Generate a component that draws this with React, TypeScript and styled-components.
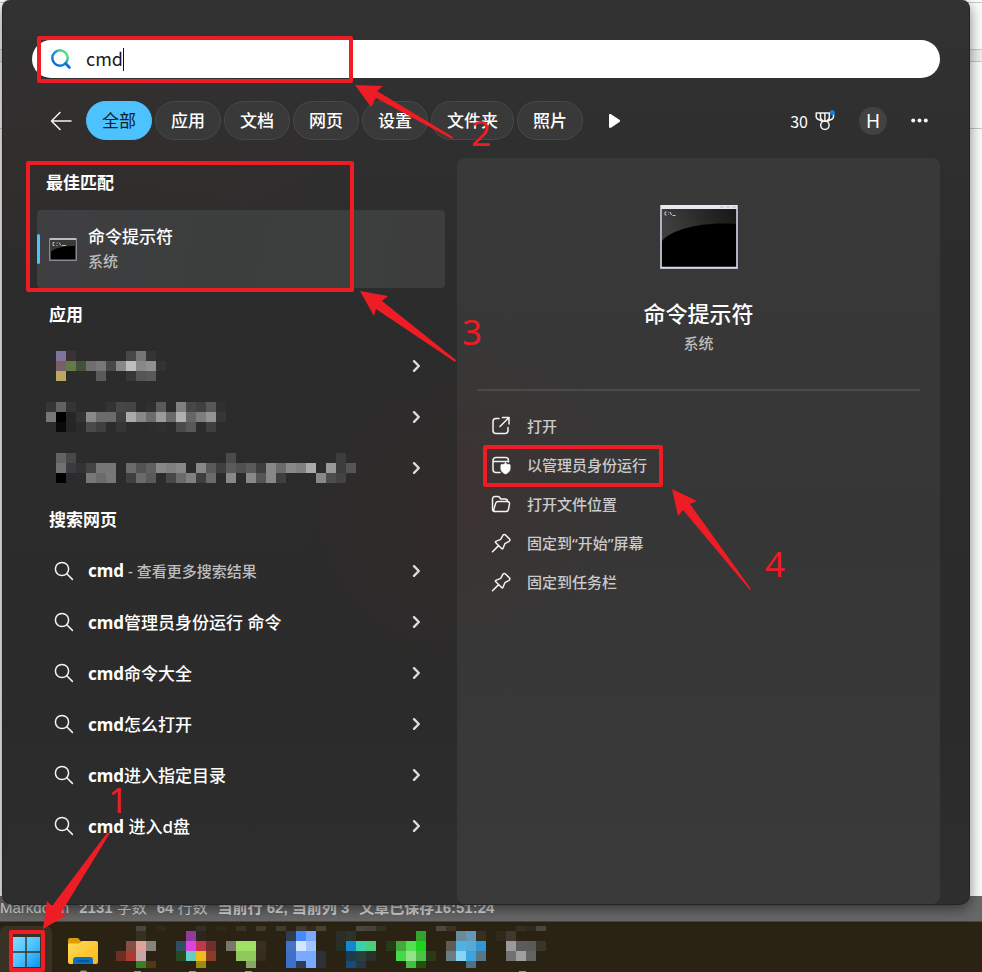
import React, { useState } from "react";
import styled, { createGlobalStyle, css } from "styled-components";

const RED = "#ee1c24";
const UI_FONT = `"Noto Sans", "Noto Sans CJK SC", sans-serif`;
const NARROW_FONT = `"Noto Sans CJK SC", sans-serif`;

const GlobalStyle = createGlobalStyle`
  *, *::before, *::after { box-sizing: border-box; }
  body {
    margin: 0;
    background: #fff;
    color: #fff;
    font-family: ${UI_FONT};
    font-size: 15px;
  }
  button, input { font: inherit; color: inherit; }
  h1, h2, p, ul { margin: 0; padding: 0; }
  ul { list-style: none; }
  svg { display: block; flex: none; }
`;

/* ---------- desktop ---------- */

const Desktop = styled.div`
  position: relative;
  display: grid;
  grid-template-rows: 1fr auto auto;
  grid-template-columns: minmax(0, 1fr);
  min-height: 100vh;
  overflow: hidden;
`;

const Editor = styled.div`
  grid-area: 1 / 1;
  display: flex;
  flex-direction: column;
  background: #fdfdfd;
`;

const EditorStrip = styled.div<{ $height: number; $shade?: boolean }>`
  height: ${(p) => p.$height}px;
  border-bottom: 1px solid #c9c9c9;
  background: ${(p) => (p.$shade ? "#efefef" : "#fdfdfd")};
`;

const StatusBar = styled.footer`
  grid-area: 2 / 1;
  display: flex;
  gap: 10px;
  height: 26px;
  line-height: 24px;
  background: #686868;
  border-bottom: 1px solid #4b4534;
  color: #dadada;
  font-family: "Liberation Sans", "Noto Sans CJK SC", sans-serif;
  font-size: 15px;
  white-space: pre;
`;

const StatusItem = styled.span`
  b { font-weight: 700; }
`;

const Panel = styled.main`
  grid-area: 1 / 1 / 3 / 2;
  display: flex;
  flex-direction: column;
  margin: 0 12px 17px 2px;
  padding: 40px 29px 0;
  border: 1px solid #242424;
  border-top: 0;
  border-radius: 8px 8px 10px 10px;
  box-shadow: 0 4px 14px rgba(0, 0, 0, 0.5);
  background:
    radial-gradient(260px 160px at 110px 160px, rgba(70, 40, 40, 0.16), transparent),
    radial-gradient(160px 160px at 450px 520px, rgba(80, 40, 30, 0.14), transparent),
    linear-gradient(#323232, #2c2c2c 30%, #2b2b2b 80%, #2e2e2e);
  z-index: 1;
`;

/* ---------- search box ---------- */

const SearchBox = styled.label`
  display: flex;
  align-items: center;
  height: 38px;
  padding-left: 18px;
  border-radius: 19px;
  background: #fff;
  color: #1b1b1b;
`;

const SearchInput = styled.input`
  field-sizing: content;
  min-width: 10px;
  margin-left: 14px;
  padding: 0 0 2px;
  border: 0;
  outline: 0;
  background: transparent;
  caret-color: transparent;
  font-family: ${NARROW_FONT};
  font-size: 18px;
  line-height: 26px;
`;

const Caret = styled.span`
  width: 1px;
  height: 23px;
  background: #111;
`;

/* ---------- filter bar ---------- */

const FilterBar = styled.nav`
  display: flex;
  align-items: center;
  height: 39px;
  margin-top: 23px;
  padding: 0 12px 0 18px;
`;

const IconButton = styled.button`
  display: inline-flex;
  align-items: center;
  padding: 0;
  border: 0;
  background: transparent;
`;

const Pills = styled.div`
  display: flex;
  gap: 3px;
  margin: 0 25px 0 14px;
`;

const Pill = styled.button<{ $active?: boolean }>`
  height: 39px;
  padding: 0 15px;
  border: 1px solid #484848;
  border-radius: 20px;
  background: #393939;
  font-size: 17px;
  font-weight: 500;
  line-height: 37px;
  white-space: nowrap;
  ${(p) =>
    p.$active &&
    css`
      border-color: #4cc2ff;
      background: #4cc2ff;
      color: #10212b;
      font-weight: 400;
    `}
`;

const Account = styled.div`
  display: flex;
  align-items: center;
  gap: 24px;
  margin-left: auto;
`;

const Rewards = styled(IconButton)`
  gap: 7px;
  font-family: ${NARROW_FONT};
  font-size: 16px;
  line-height: 20px;
`;

const Avatar = styled.button`
  width: 28px;
  height: 28px;
  padding: 0;
  border: 0;
  border-radius: 50%;
  background: #424242;
  font-size: 19px;
  line-height: 28px;
`;

/* ---------- results ---------- */

const Columns = styled.div`
  flex: 1;
  display: grid;
  grid-template-columns: 413fr 483fr;
  gap: 12px;
  margin-top: 18px;
`;

const Results = styled.section`
  padding-left: 5px;
  min-width: 0;
`;

const SectionTitle = styled.h2<{ $first?: boolean }>`
  padding: ${(p) => (p.$first ? "0 0 2px 9px" : "2px 0 0 12px")};
  font-size: 17px;
  font-weight: 700;
  line-height: 50px;
`;

const BestMatch = styled.button`
  display: flex;
  align-items: center;
  width: 100%;
  height: 78px;
  padding: 0;
  border: 0;
  border-radius: 4px;
  background: linear-gradient(100deg, #403e41, #3c3e3e 40%, #3d3d3d);
  text-align: left;
`;

const Accent = styled.span`
  width: 3px;
  height: 30px;
  margin-right: 9px;
  border-radius: 2px;
  background: #4cc2ff;
`;

const MatchText = styled.span`
  display: flex;
  flex-direction: column;
  margin-left: 11px;
  font-size: 17px;
  font-weight: 500;
  line-height: 24px;
`;

const Muted = styled.span`
  color: #bdbdbd;
  font-size: 15px;
  font-weight: 500;
`;

const Row = styled.button<{ $inset: number }>`
  display: flex;
  align-items: center;
  gap: 14px;
  width: 100%;
  height: 51px;
  padding: 0 24px 0 ${(p) => p.$inset}px;
  border: 0;
  background: transparent;
  font-size: 17px;
  font-weight: 500;
  text-align: left;
`;

const RowText = styled.span`
  flex: 1;
  min-width: 0;
  white-space: pre;
  b { font-weight: 700; }
`;

/* ---------- details ---------- */

const Details = styled.section`
  padding: 47px 20px 0;
  border-radius: 8px;
  background:
    radial-gradient(180px 170px at 0 330px, rgba(80, 40, 35, 0.22), transparent),
    linear-gradient(#393939, #363636 50%, #3a3a3a);
`;

const Hero = styled.header`
  display: flex;
  flex-direction: column;
  align-items: center;
  padding-bottom: 34px;
  border-bottom: 2px solid #4b4b4b;
`;

const HeroTitle = styled.h1`
  margin-top: 27px;
  font-size: 22px;
  font-weight: 500;
  line-height: 34px;
`;

const HeroKind = styled.p`
  margin-top: 1px;
  color: #bdbdbd;
  font-weight: 500;
  line-height: 24px;
`;

const Actions = styled.ul`
  padding-top: 15px;
`;

const Action = styled.button`
  display: flex;
  align-items: center;
  gap: 16px;
  width: 100%;
  height: 39px;
  padding: 0 14px;
  border: 0;
  background: transparent;
  color: #cacaca;
  font-weight: 500;
  white-space: nowrap;
`;

/* ---------- taskbar ---------- */

const Taskbar = styled.nav`
  grid-area: 3 / 1;
  display: flex;
  align-items: stretch;
  height: 50px;
  background: #2a2314;
`;

const TaskButton = styled.button<{ $start?: boolean; $wide?: boolean }>`
  display: flex;
  justify-content: center;
  align-items: flex-start;
  flex: none;
  width: ${(p) => (p.$start ? "52px" : p.$wide ? "64px" : "auto")};
  margin-top: 4px;
  padding: ${(p) => (p.$start || p.$wide ? "10px 0 0" : "0")};
  border: 0;
  border-radius: 6px 6px 0 0;
  background: ${(p) => (p.$start ? "#393224" : "transparent")};
`;

/* ---------- annotations ---------- */

const Annotations = styled.svg`
  position: absolute;
  top: 0;
  left: 0;
  z-index: 2;
  pointer-events: none;
  font-family: "Noto Sans", sans-serif;
  font-size: 35px;
`;

/* ---------- drawings ---------- */

const Stroke = ({ size = 20, width = 1.5, children }: { size?: number; width?: number; children: React.ReactNode }) => (
  <svg width={size} height={size} viewBox="0 0 20 20" fill="none" stroke="#f4f4f4" strokeWidth={width} strokeLinecap="round" strokeLinejoin="round" aria-hidden>
    {children}
  </svg>
);

const Magnifier = () => (
  <Stroke><circle cx="8" cy="8" r="6.6" /><path d="M12.8 12.8 18.4 18.4" /></Stroke>
);

const Chevron = () => (
  <svg width="10" height="14" viewBox="0 0 10 14" fill="none" stroke="#dcdcdc" strokeWidth="2.4" strokeLinecap="round" strokeLinejoin="round" aria-hidden>
    <path d="M3 2.200 7.800 7 3 11.800" />
  </svg>
);

const BingSearch = () => (
  <svg width="22" height="22" viewBox="0 0 22 22" fill="none" strokeWidth="2.4" strokeLinecap="round" aria-hidden>
    <defs>
      <linearGradient id="lens" x1="3" y1="16" x2="17" y2="3" gradientUnits="userSpaceOnUse">
        <stop offset="0.1" stopColor="#0b6fd6" />
        <stop offset="0.5" stopColor="#1a93d6" />
        <stop offset="0.9" stopColor="#5be37c" />
      </linearGradient>
    </defs>
    <circle cx="10" cy="10" r="7.7" stroke="url(#lens)" />
    <path d="m15.6 15.6 3.8 3.8" stroke="#0f6fd8" strokeWidth="2.8" />
  </svg>
);

const Back = () => (
  <svg width="22" height="20" viewBox="0 0 22 20" fill="none" stroke="#f4f4f4" strokeWidth="1.5" strokeLinecap="round" strokeLinejoin="round" aria-hidden>
    <path d="M21 10H1.5M10 1.5 1.5 10l8.5 8.5" />
  </svg>
);

const Play = () => (
  <svg width="13" height="16" viewBox="0 0 13 16" fill="#fff" aria-hidden>
    <path d="M1 2.4C1 1 2.3.6 3.4 1.4l8 5.4c.9.6.9 1.6 0 2.2l-8 5.5C2.300 15.300 1 14.800 1 13.400Z" />
  </svg>
);

const Trophy = () => (
  <svg width="20" height="22" viewBox="0 0 20 22" fill="none" stroke="#f4f4f4" strokeWidth="1.500" strokeLinejoin="round" aria-hidden>
    <path d="M1.200 3h17.300v3.500c0 1.500-1 2.600-2.400 3l-3.800 1.700H7.500l-3.900-1.700C2.200 9.100 1.200 8 1.200 6.500ZM5.500 3v5.200l2.500 3M14.300 3v5.200l-2.500 3M9.900 3v7.500" />
    <circle cx="9.900" cy="15.300" r="4.200" />
    <circle cx="17.300" cy="2.600" r="2.500" fill="#0f7fe0" stroke="none" />
  </svg>
);

const Dots = () => (
  <svg width="17" height="5" viewBox="0 0 17 5" fill="#f4f4f4" aria-hidden>
    <circle cx="2.200" cy="2.500" r="2" /><circle cx="8.500" cy="2.500" r="2" /><circle cx="14.800" cy="2.500" r="2" />
  </svg>
);

const TerminalLarge = () => (
  <svg width="78" height="64" viewBox="0 0 78 64" aria-hidden>
    <defs>
      <linearGradient id="gloss" x1="0" y1="0.200" x2="1" y2="0">
        <stop offset="0" stopColor="#3e3e3e" /><stop offset="1" stopColor="#161616" />
      </linearGradient>
    </defs>
    <rect width="78" height="64" fill="#aeb4c4" />
    <rect x="1" y="0" width="76" height="4" fill="#e6e8f2" />
    <path d="M60 2h4M66 2h4M72 2h4" stroke="#b4b7c5" strokeWidth="1" />
    <rect x="2" y="4" width="74" height="58" fill="#000" />
    <path d="M2 4h74v15C44 17 14 23 2 36Z" fill="url(#gloss)" />
    <path d="M6.500 7H5v3h1.500M8.500 7.500v.5M8.500 9.500v.5M10 7l1.500 3M12.500 10.500h3" stroke="#c8c8c8" fill="none" />
    <path d="M1 62.500h76" stroke="#d8dbe6" strokeWidth="1.500" />
  </svg>
);

const TerminalSmall = () => (
  <svg width="28" height="23" viewBox="0 0 28 23" aria-hidden>
    <rect width="28" height="23" rx="1" fill="#878d93" />
    <rect x="1" y="0" width="26" height="2" fill="#b9bdc2" />
    <rect x="1.500" y="2" width="25" height="19.500" fill="#000" />
    <path d="M1.500 2h25v6C16 8 7 9 1.500 14Z" fill="#393939" />
    <path d="M5.500 4.500H4v3h1.500M8 4.500v1M8 7v1M10 4.500l2 3M13 7.500h4" stroke="#c0c0c0" fill="none" />
  </svg>
);

const OpenIcon = () => (
  <Stroke>
    <path d="M8 2.500H5A3 3 0 0 0 2 5.500v9a3 3 0 0 0 3 3h9a3 3 0 0 0 3-3v-3M11.500 1.500H18V8M17.500 2 9 10.500" />
  </Stroke>
);

const AdminIcon = () => (
  <Stroke>
    <path d="M9 17.500H5a3 3 0 0 1-3-3v-9a3 3 0 0 1 3-3h9.500a3 3 0 0 1 3 3V7M2 6.500h15.500" />
    <path d="M14.500 8.200c1.300 1.100 2.700 1.500 4.500 1.600v4c0 2.400-1.800 4-4.500 5-2.700-1-4.500-2.600-4.500-5v-4c1.800-.1 3.200-.5 4.500-1.600Z" fill="#fff" stroke="#fff" strokeWidth="1" />
  </Stroke>
);

const FolderIcon = () => (
  <Stroke>
    <path d="M4 17.500A2.500 2.500 0 0 1 1.500 15V5A2.500 2.500 0 0 1 4 2.500h2.800c.7 0 1.300.3 1.700.8L9.800 5H14a2.500 2.500 0 0 1 2.500 2.500" />
    <path d="M7.500 7.500h9a2 2 0 0 1 2 2.400l-1.100 5.600a2.500 2.500 0 0 1-2.400 2H4c-1 0-1.600-.9-1.300-1.900l2.100-6.500a2.500 2.500 0 0 1 2.700-1.600Z" />
  </Stroke>
);

const PinIcon = () => (
  <Stroke>
    <path d="M12 2.200c.6-.9 1.700-1 2.500-.2l3.900 3.900c.8.800.6 2-.3 2.500l-4.200 2.300-2 4.800c-.2.500-.7.600-1.100.2L4.600 9.500c-.4-.4-.2-.9.200-1.100l4.900-2ZM7.600 12.600 1.500 18.700" />
  </Stroke>
);

const WindowsLogo = () => (
  <svg width="30" height="31" viewBox="0 0 30 31" aria-hidden>
    <defs>
      <linearGradient id="win" x1="0" y1="0" x2="1" y2="1">
        <stop offset="0" stopColor="#87dcff" /><stop offset="0.500" stopColor="#4ec3ff" /><stop offset="1" stopColor="#0d92f5" />
      </linearGradient>
    </defs>
    <path fill="url(#win)" d="M1 1h13.300v14.300H1ZM15.700 1H29v14.300H15.700ZM1 16.700h13.300V31H1ZM15.700 16.700H29V31H15.700Z" />
  </svg>
);

const FolderTask = () => (
  <svg width="32" height="36" viewBox="0 0 32 36" aria-hidden>
    <defs>
      <linearGradient id="fold" x1="0" y1="0" x2="1" y2="1">
        <stop offset="0" stopColor="#ffdc5c" /><stop offset="1" stopColor="#fdb813" />
      </linearGradient>
    </defs>
    <path d="M0 4a2 2 0 0 1 2-2h7c1 0 1.500.4 2 1l2 2.500h4V14H0Z" fill="#dd9b05" />
    <path d="M0 7.500h11l3-2.500h14a2 2 0 0 1 2 2v19a2 2 0 0 1-2 2H2a2 2 0 0 1-2-2Z" fill="url(#fold)" />
    <path d="M5 28v-4a3 3 0 0 1 3-3h14a3 3 0 0 1 3 3v4Z" fill="#0f6fc5" />
    <path d="M9.500 25h11" stroke="#0a4f95" strokeWidth="1.500" strokeLinecap="round" />
    <rect x="12" y="34.500" width="7" height="3" rx="1.500" fill="#9a958a" />
  </svg>
);

/* One string per row, "column=colour" for each ten-pixel cell. */
type Mosaic = string[];

const cells = (rows: Mosaic) =>
  rows.flatMap((row, y) =>
    row.split(" ").filter(Boolean).map((cell) => {
      const [x, fill] = cell.split("=");
      return { x: Number(x), y, fill: "#" + fill };
    })
  );

const appMosaics: { cols: number; rows: Mosaic }[] = [
  { cols: 12, rows: [
    "0=2a2c2f 1=7d759b 2=3a3233 8=474747 9=757575 10=343434",
    "1=785f6b 2=617c46 3=425138 4=6e6e6e 5=777777 6=484848 7=888888 8=bebebe 9=888888 10=909090 11=333333",
    "1=bda764 5=5a5a5a 8=383838 9=555555 10=595959",
  ] },
  { cols: 18, rows: [
    "0=363636 1=606264 2=333436 6=333333 7=464646 8=444444 10=2f2f2f 11=5a5a5a 13=808080 14=474747 15=404040 16=585858 17=303030",
    "0=777777 1=000000 2=252628 3=333333 4=898989 5=6b6b6b 6=6b6b6b 7=3f3f3f 8=aaaaaa 9=888888 10=6c6c6c 11=9b9b9b 12=6a6a6a 13=b0b0b0 14=666666 15=7e7e7e 16=939393 17=363636",
    "1=0a0a0a 2=252525 4=4b4b4b 5=404040 7=353535 10=2d2d2d 11=2f2f2f 13=4b4b4b 14=585858 16=404040",
  ] },
  { cols: 31, rows: [
    "1=616365 2=46484a 18=4b4b4b 29=3d3d3d",
    "1=707173 2=3a3b3e 3=323335 4=434343 5=777777 6=777777 8=6b6b6b 9=525252 10=606060 11=888888 12=808080 13=888888 15=888888 16=5a5a5a 17=404040 18=5a5a5a 19=505050 20=5a5a5a 21=3e3e3e 22=888888 23=6b6b6b 24=888888 25=808080 26=aaaaaa 28=999999 29=3d3d3d 30=555555",
    "1=000000 4=777777 5=6b6b6b 6=777777 8=3f3f3f 9=6b6b6b 10=5a5a5a 12=484848 13=6b6b6b 14=808080 15=3e3e3e 16=6b6b6b 18=888888 20=888888 21=555555 22=888888 23=3f3f3f 27=888888 28=4d4d4d 29=434343",
  ] },
];

const taskMosaics: { cols: number; mark?: number; rows: Mosaic }[] = [
  { cols: 6, mark: 18, rows: ["2=474542 4=30291d", "2=38301f", "1=874e43 2=dfa39c 3=8a8379", "0=702d23 1=a83c31 2=c5a7a9", "2=35812a 3=4d3c12"] },
  { cols: 5, mark: 13, rows: ["2=352e22 4=2f271b", "1=923a98 2=30251e", "0=2d5160 1=d944e3 2=c13648 3=702f2c", "0=294a20 1=68cdc5 2=f0bb1d 3=8c3b27", "2=9b8912"] },
  { cols: 6, mark: 19, rows: ["1=3a3226 3=403a2c 5=403b30", "", "0=7b766b 1=9fe065 2=9fe065 3=38301f", "1=8fc75c 2=8fc75c 3=352c1c", "2=86a766"] },
  { cols: 5, rows: ["1=403b32 2=30291f 3=474333", "0=303c4f 1=458bff 2=7aaaff", "0=4472c4 1=d5e4fc 2=a3c5ff", "0=4070c5 1=7aaaff 2=7aaaff 3=2c3137", "0=3d70cc 1=303d57 2=7aaaff 3=2c3137"] },
  { cols: 5, rows: ["2=4a463d 3=474239 4=352e23", "0=2b2e26 1=2a342d", "0=283026 1=1388cf 2=3bd0ab 3=4bce7b", "1=1d3a4e 2=28403a 3=29302a", "1=154c7c 2=243747"] },
  { cols: 6, rows: ["5=4c483f", "3=2fa52b", "0=273c14 1=45a83e 2=54e052 3=1bd51b", "1=43dc44 2=90e28c 3=4dc14a 4=273c14", "2=43c040 3=21530f"] },
  { cols: 5, rows: ["0=3a3327", "1=678a9d 2=6398b9 3=363024", "0=5f5c53 1=50b2e2 2=58a9d8 3=3197d1", "0=6a7c84 1=83d4f5 2=3da3dc 3=5a7584", "2=50707f"] },
  { cols: 5, mark: 23, rows: ["2=352e23 3=30291f 4=4a463f", "0=30291b 1=40392f", "1=9a9a9a 2=5c5c5d 3=5a5a5b 4=38362b", "1=717173 2=a0a0a1 3=636364"] },
];

const AppMosaic = ({ cols, rows }: { cols: number; rows: Mosaic }) => (
  <svg width={cols * 10} height="30" shapeRendering="crispEdges" aria-hidden>
    {cells(rows).map((c) => <rect key={`${c.x}-${c.y}`} x={c.x * 10} y={c.y * 10} width="10" height="10" fill={c.fill} />)}
  </svg>
);

const TaskMosaic = ({ cols, rows, mark }: { cols: number; rows: Mosaic; mark?: number }) => (
  <svg width={cols * 10} height="46" shapeRendering="crispEdges" aria-hidden>
    {cells(rows).map((c) => (
      <rect key={`${c.x}-${c.y}`} x={c.x * 10} y={c.y === 0 ? 0 : c.y * 10 - 5} width="10" height={c.y === 0 ? 5 : c.y === 4 ? 7 : 10} fill={c.fill} />
    ))}
    {mark !== undefined && <rect x={mark} y="45" width="7" height="1" fill="#9a958a" />}
  </svg>
);

/* ---------- data ---------- */

const filters = ["全部", "应用", "文档", "网页", "设置", "文件夹", "照片"];

const webResults: { rest?: string; note?: string }[] = [
  { note: " - 查看更多搜索结果" },
  { rest: "管理员身份运行 命令" },
  { rest: "命令大全" },
  { rest: "怎么打开" },
  { rest: "进入指定目录" },
  { rest: " 进入d盘" },
];

const actions = [
  { label: "打开", Icon: OpenIcon },
  { label: "以管理员身份运行", Icon: AdminIcon },
  { label: "打开文件位置", Icon: FolderIcon },
  { label: "固定到“开始”屏幕", Icon: PinIcon },
  { label: "固定到任务栏", Icon: PinIcon },
];

const boxes = [
  { x: 39, y: 38, w: 312, h: 43 },
  { x: 28, y: 163, w: 324, h: 127 },
  { x: 485, y: 447, w: 176, h: 38 },
  { x: 11, y: 932, w: 32, h: 38 },
];

const arrows = [
  "355,85 383,86 377,91 453,137 452,139 376,98 371,107",
  "360,291 388,296 382,301 456,360 455,362 376,309 374,316",
  "672,489 697,501 690,504 751,589 750,590 683,510 678,516",
  "43,929 47,901 52,906 107,833 110,833 61,913 67,915",
];

const steps = [
  { n: "1", x: 108, y: 813 },
  { n: "2", x: 471, y: 146 },
  { n: "3", x: 462, y: 345 },
  { n: "4", x: 765, y: 577 },
];

export default function App() {
  const [query, setQuery] = useState("cmd");
  const [filter, setFilter] = useState("全部");

  return (
    <>
      <GlobalStyle />
      <Desktop>
        <Editor>
          <EditorStrip $height={3} />
          <EditorStrip $height={47} />
          <EditorStrip $height={12} $shade />
          <EditorStrip $height={67} />
        </Editor>
        <StatusBar>
          <StatusItem>Markdown</StatusItem>
          <StatusItem><b>2131</b> 字数</StatusItem>
          <StatusItem><b>64</b> 行数</StatusItem>
          <StatusItem><b>当前行 62, 当前列 3</b></StatusItem>
          <StatusItem><b>文章已保存16:51:24</b></StatusItem>
        </StatusBar>

        <Panel>
          <SearchBox>
            <BingSearch />
            <SearchInput aria-label="搜索" value={query} onChange={(e) => setQuery(e.target.value)} />
            <Caret />
          </SearchBox>

          <FilterBar>
            <IconButton aria-label="返回"><Back /></IconButton>
            <Pills>
              {filters.map((name) => (
                <Pill key={name} $active={name === filter} onClick={() => setFilter(name)}>{name}</Pill>
              ))}
            </Pills>
            <IconButton aria-label="更多筛选"><Play /></IconButton>
            <Account>
              <Rewards>30<Trophy /></Rewards>
              <Avatar>H</Avatar>
              <IconButton aria-label="选项"><Dots /></IconButton>
            </Account>
          </FilterBar>

          <Columns>
            <Results>
              <SectionTitle $first>最佳匹配</SectionTitle>
              <BestMatch>
                <Accent />
                <TerminalSmall />
                <MatchText>命令提示符<Muted>系统</Muted></MatchText>
              </BestMatch>

              <SectionTitle>应用</SectionTitle>
              {appMosaics.map((mosaic, i) => (
                <Row key={i} $inset={9} aria-label={`应用 ${i + 1}`}>
                  <RowText><AppMosaic {...mosaic} /></RowText>
                  <Chevron />
                </Row>
              ))}

              <SectionTitle>搜索网页</SectionTitle>
              {webResults.map(({ rest, note }) => (
                <Row key={rest ?? note} $inset={17}>
                  <Magnifier />
                  <RowText><b>cmd</b>{rest}{note && <Muted>{note}</Muted>}</RowText>
                  <Chevron />
                </Row>
              ))}
            </Results>

            <Details>
              <Hero>
                <TerminalLarge />
                <HeroTitle>命令提示符</HeroTitle>
                <HeroKind>系统</HeroKind>
              </Hero>
              <Actions>
                {actions.map(({ label, Icon }) => (
                  <li key={label}><Action><Icon />{label}</Action></li>
                ))}
              </Actions>
            </Details>
          </Columns>
        </Panel>

        <Taskbar>
          <TaskButton $start aria-label="开始"><WindowsLogo /></TaskButton>
          <TaskButton $wide aria-label="文件资源管理器"><FolderTask /></TaskButton>
          {taskMosaics.map((mosaic, i) => (
            <TaskButton key={i} aria-label={`任务 ${i + 1}`}><TaskMosaic {...mosaic} /></TaskButton>
          ))}
        </Taskbar>

        <Annotations width="982" height="972" viewBox="0 0 982 972">
          {boxes.map((b) => (
            <rect key={b.y} x={b.x} y={b.y} width={b.w} height={b.h} fill="none" stroke={RED} strokeWidth="4" strokeLinejoin="round" />
          ))}
          {arrows.map((points) => <polygon key={points} points={points} fill={RED} />)}
          {steps.map((s) => <text key={s.n} x={s.x} y={s.y} fill={RED}>{s.n}</text>)}
        </Annotations>
      </Desktop>
    </>
  );
}
